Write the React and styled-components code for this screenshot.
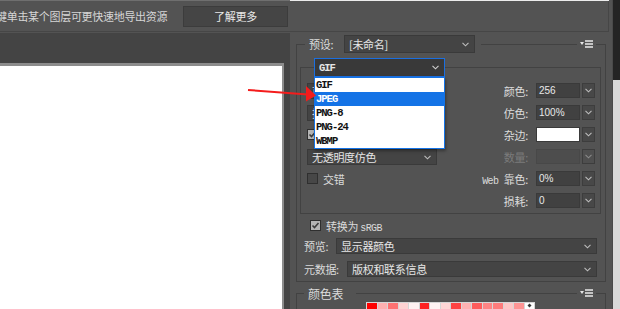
import React from 'react';
import styled, { createGlobalStyle } from 'styled-components';

const CJK = '"Noto Sans CJK SC", "Liberation Sans", sans-serif';
const MONO = '"Liberation Mono", "Noto Sans CJK SC", monospace';
const SANS = '"Liberation Sans", "Noto Sans CJK SC", sans-serif';
const LINE = '#424242';

const GlobalStyle = createGlobalStyle`
    * {
        box-sizing: border-box;
    }
    html,
    body {
        margin: 0;
        padding: 0;
        background: #535353;
    }
    body {
        width: 620px;
        height: 309px;
        overflow: hidden;
        font-family: ${CJK};
        font-size: 11px;
        letter-spacing: -0.3px;
        color: #dadada;
    }
`;

const Window = styled.div`
    position: relative;
    display: grid;
    grid-template-columns: 612px 8px;
    width: 620px;
    height: 309px;
    overflow: hidden;
`;

const Main = styled.div`
    display: flex;
    flex-direction: column;
    min-width: 0;
`;

const TopEdge = styled.div`
    height: 1px;
    background: linear-gradient(to right, #6f6f6f 290px, #ececec 290px, #ececec 609px, #535353 609px);
`;

const TopBar = styled.div`
    display: flex;
    align-items: center;
    height: 31px;
    margin-right: 3px;
    border-bottom: 1px solid #464646;
    border-right: 1px solid #464646;
`;

const Hint = styled.span`
    flex: 0 0 187px;
    margin-left: -4px;
    white-space: nowrap;
    color: #d6d6d6;
`;

const LearnButton = styled.div`
    display: flex;
    align-items: center;
    justify-content: center;
    width: 105px;
    height: 21px;
    background: #454545;
    border: 1px solid #3c3c3c;
    color: #e8e8e8;
    font-size: 11px;
`;

const Body = styled.div`
    display: flex;
    flex: 1;
    min-height: 0;
`;

const PreviewPane = styled.div`
    width: 290px;
    margin-top: 1px;
    padding: 30px 6px 0 0;
    background: #444444;
    overflow: hidden;
`;

const PreviewFrame = styled.div`
    height: 260px;
    margin-left: -10px;
    background: #ffffff;
    border-top: 3px solid #8c8c8c;
    border-right: 2px solid #8c8c8c;
`;

const SidePanel = styled.div`
    flex: 1;
    padding: 3px 0 0 6px;
`;

const RightStrip = styled.div`
    background: linear-gradient(to bottom, #242424 80px, #d9d9d9 80px);
    border-left: 1px solid #4a4a4a;
`;

const Group = styled.fieldset`
    width: ${props => (props.$w ? `${props.$w}px` : 'auto')};
    min-width: 0;
    margin: ${props => props.$mt || 0}px 0 0;
    padding: 0;
    border: 1px solid ${LINE};
`;

const GroupHead = styled.legend`
    display: flex;
    align-items: center;
    width: 100%;
    height: ${props => props.$h}px;
    padding: 0;
    margin: 0;
`;

const HeadLine = styled.span`
    flex: ${props => (props.$w ? `0 0 ${props.$w}px` : '1 1 auto')};
    height: 1px;
    margin: 0 ${props => props.$mr || 0}px 0 ${props => props.$ml || 0}px;
    background: ${LINE};
`;

const HeadLabel = styled.span`
    flex: 0 0 ${props => props.$w}px;
    margin-left: 4px;
    white-space: nowrap;
    font-size: ${props => props.$size || 11}px;
    color: #dcdcdc;
`;

const GroupBody = styled.div`
    padding: ${props => props.$pad};
`;

const Select = styled.div`
    display: flex;
    align-items: center;
    flex: ${props => (props.$w ? `0 0 ${props.$w}px` : '1 1 auto')};
    height: ${props => props.$h || 16}px;
    padding: 0 5px 0 4px;
    background: #444444;
    border: 1px solid #3a3a3a;
    color: #e6e6e6;
    min-width: 0;
`;

const SelectText = styled.span`
    flex: 1;
    white-space: nowrap;
    overflow: hidden;
`;

const FormatGroup = styled(Group)`
    padding: 0 5px 5px 6px;
`;

const FormatLegend = styled.legend`
    position: relative;
    width: 131px;
    height: 19px;
    margin-left: 7px;
    padding: 0;
`;

const FormatSelect = styled(Select)`
    height: 19px;
    background: #393939;
    border-color: #1b6fe0;
    font-family: ${MONO};
    font-size: 10.5px;
    font-weight: bold;
    letter-spacing: -1px;
`;

const FormatList = styled.ul`
    position: absolute;
    top: 100%;
    left: 0;
    z-index: 5;
    width: 131px;
    margin: 0;
    padding: 0;
    list-style: none;
    background: #ffffff;
    border: 1px solid #1473e6;
    box-shadow: 1px 2px 3px rgba(0, 0, 0, 0.35);
`;

const FormatItem = styled.li`
    height: 14px;
    line-height: 14px;
    padding-left: 1px;
    font-family: ${MONO};
    font-size: 10.5px;
    font-weight: bold;
    letter-spacing: -1px;
    color: ${props => (props.$active ? '#ffffff' : '#111111')};
    background: ${props => (props.$active ? '#1473e6' : 'transparent')};
`;

const OptionsGrid = styled.div`
    display: grid;
    grid-template-columns: 130px 1fr;
    grid-template-rows: repeat(6, 15px);
    row-gap: 7px;
    padding-top: 6px;
`;

const Field = styled.div`
    display: flex;
    align-items: center;
    justify-content: flex-end;
`;

const FieldLabel = styled.span`
    margin-right: 8px;
    white-space: nowrap;
    color: ${props => (props.$disabled ? '#7b7b7b' : '#dcdcdc')};
`;

const Latin = styled.span`
    font-family: ${MONO};
    font-size: 10px;
    letter-spacing: -0.6px;
`;

const FieldInput = styled.div`
    display: flex;
    align-items: center;
    width: 44px;
    height: 15px;
    padding-left: 2px;
    background: ${props => (props.$white ? '#ffffff' : props.$disabled ? '#4d4d4d' : '#414141')};
    border: 1px solid ${props => (props.$disabled ? '#484848' : '#3a3a3a')};
    font-family: ${SANS};
    font-size: 10px;
    letter-spacing: 0;
    color: #e8e8e8;
`;

const FieldArrow = styled.div`
    display: flex;
    align-items: center;
    justify-content: center;
    width: 13px;
    height: 15px;
    margin-left: 2px;
    background: ${props => (props.$disabled ? '#4f4f4f' : '#484848')};
    border: 1px solid #3d3d3d;
`;

const CheckRow = styled.div`
    display: flex;
    align-items: center;
    gap: 5px;
    height: ${props => props.$h || 15}px;
    margin: ${props => props.$m || 0};
    white-space: nowrap;
`;

const Box = styled.span`
    display: flex;
    align-items: center;
    justify-content: center;
    flex: 0 0 11px;
    height: 11px;
    border: 1px solid #2f2f2f;
    background: ${props => (props.$checked ? '#b4b4b4' : '#474747')};
`;

const Row = styled.div`
    display: flex;
    align-items: center;
    height: 16px;
    margin: ${props => props.$mt}px 4px 0 4px;
`;

const RowLabel = styled.span`
    flex: 0 0 ${props => props.$w}px;
    white-space: nowrap;
`;

const Swatches = styled.div`
    display: flex;
    gap: 1px;
    width: max-content;
    margin-left: 69px;
    padding: 1px 1px 0;
    background: #d6d6d6;
`;

const Swatch = styled.span`
    display: flex;
    justify-content: center;
    width: 9.5px;
    height: 12px;
    background: ${props => props.$color};
`;

const ArrowMark = styled.svg`
    position: absolute;
    left: 240px;
    top: 80px;
    z-index: 9;
`;

const Chevron = ({ color = '#bdbdbd' }) => (
    <svg width="7" height="5" viewBox="0 0 7 5">
        <polyline points="0.5,0.8 3.5,3.8 6.5,0.8" fill="none" stroke={color} strokeWidth="1.1" />
    </svg>
);

const MenuIcon = () => (
    <svg width="13" height="8" viewBox="0 0 13 8">
        <polygon points="0,2 4,2 2,5" fill="#e6e6e6" />
        <rect x="5" y="0" width="8" height="2" fill="#c4c4c4" />
        <rect x="5" y="3" width="8" height="2" fill="#c4c4c4" />
        <rect x="5" y="6" width="8" height="2" fill="#c4c4c4" />
    </svg>
);

const Check = () => (
    <svg width="9" height="9" viewBox="0 0 9 9">
        <polyline points="1.5,4.5 3.5,6.5 7.5,2" fill="none" stroke="#3c3c3c" strokeWidth="1.6" />
    </svg>
);

const formats = ['GIF', 'JPEG', 'PNG-8', 'PNG-24', 'WBMP'];

const fields = [
    { label: '颜色:', value: '256' },
    { label: '仿色:', value: '100%' },
    { label: '杂边:', white: true },
    { label: '数量:', disabled: true },
    { label: '靠色:', latin: 'Web ', value: '0%' },
    { label: '损耗:', value: '0' }
];

const swatchColors = [
    '#ff0000', '#ffb0b0', '#ff7272', '#ffd2d2', '#fff1f1', '#ff2222', '#fff3f3', '#ffd6d6',
    '#ff4444', '#ffb2b2', '#ff5c5c', '#ff8484', '#ff7c7c', '#ffc6c6', '#ff9494', '#ffffff'
];

const leftCells = [
    <Select key="a"><SelectText>可选择</SelectText><Chevron /></Select>,
    <Select key="b"><SelectText>扩散</SelectText><Chevron /></Select>,
    <CheckRow key="c"><Box $checked><Check /></Box>透明度</CheckRow>,
    <Select key="d"><SelectText>无透明度仿色</SelectText><Chevron /></Select>,
    <CheckRow key="e"><Box />交错</CheckRow>,
    <span key="f" />
];

const App = () => (
    <>
        <GlobalStyle />
        <Window>
            <Main>
                <TopEdge />
                <TopBar>
                    <Hint>键单击某个图层可更快速地导出资源</Hint>
                    <LearnButton>了解更多</LearnButton>
                </TopBar>
                <Body>
                    <PreviewPane>
                        <PreviewFrame />
                    </PreviewPane>
                    <SidePanel>
                        <Group $w={310}>
                            <GroupHead $h={18}>
                                <HeadLine $w={8} />
                                <HeadLabel $w={35}>预设:</HeadLabel>
                                <Select $w={131} $h={18}>
                                    <SelectText>[未命名]</SelectText>
                                    <Chevron />
                                </Select>
                                <HeadLine $ml={6} $mr={3} />
                                <MenuIcon />
                                <HeadLine $w={9} $ml={3} />
                            </GroupHead>
                            <GroupBody $pad="5px 4px 4px 3px">
                                <FormatGroup>
                                    <FormatLegend>
                                        <FormatSelect $w={131}>
                                            <SelectText>GIF</SelectText>
                                            <Chevron color="#d0d0d0" />
                                        </FormatSelect>
                                        <FormatList>
                                            {formats.map(f => (
                                                <FormatItem key={f} $active={f === 'JPEG'}>
                                                    {f}
                                                </FormatItem>
                                            ))}
                                        </FormatList>
                                    </FormatLegend>
                                    <OptionsGrid>
                                        {fields.map((field, i) => (
                                            <React.Fragment key={field.label}>
                                                {leftCells[i]}
                                                <Field>
                                                    <FieldLabel $disabled={field.disabled}>
                                                        {field.latin && <Latin>{field.latin}</Latin>}
                                                        {field.label}
                                                    </FieldLabel>
                                                    <FieldInput $white={field.white} $disabled={field.disabled}>
                                                        {field.value}
                                                    </FieldInput>
                                                    <FieldArrow $disabled={field.disabled}>
                                                        <Chevron color={field.disabled ? '#8a8a8a' : '#bdbdbd'} />
                                                    </FieldArrow>
                                                </Field>
                                            </React.Fragment>
                                        ))}
                                    </OptionsGrid>
                                </FormatGroup>
                                <CheckRow $h={11} $m="6px 0 0 10px">
                                    <Box $checked>
                                        <Check />
                                    </Box>
                                    <span>
                                        转换为 <Latin>sRGB</Latin>
                                    </span>
                                </CheckRow>
                                <Row $mt={7}>
                                    <RowLabel $w={32}>预览:</RowLabel>
                                    <Select>
                                        <SelectText>显示器颜色</SelectText>
                                        <Chevron />
                                    </Select>
                                </Row>
                                <Row $mt={7}>
                                    <RowLabel $w={43}>元数据:</RowLabel>
                                    <Select>
                                        <SelectText>版权和联系信息</SelectText>
                                        <Chevron />
                                    </Select>
                                </Row>
                            </GroupBody>
                        </Group>
                        <Group $w={310} $mt={4}>
                            <GroupHead $h={14}>
                                <HeadLine $w={7} />
                                <HeadLabel $w={36} $size={12}>颜色表</HeadLabel>
                                <HeadLine $ml={12} $mr={3} />
                                <MenuIcon />
                                <HeadLine $w={9} $ml={3} />
                            </GroupHead>
                            <GroupBody $pad="2px 0 0 0">
                                <Swatches>
                                    {swatchColors.map((c, i) => (
                                        <Swatch key={i} $color={c}>
                                            {i === swatchColors.length - 1 && (
                                                <svg width="5" height="5" viewBox="0 0 5 5">
                                                    <polygon points="2.5,0.5 4.5,2.5 2.5,4.5 0.5,2.5" fill="#333" />
                                                </svg>
                                            )}
                                        </Swatch>
                                    ))}
                                </Swatches>
                            </GroupBody>
                        </Group>
                    </SidePanel>
                </Body>
            </Main>
            <RightStrip />
            <ArrowMark width="80" height="26" viewBox="0 0 80 26">
                <line x1="8" y1="10" x2="68" y2="14.5" stroke="#f41c1c" strokeWidth="2" />
                <polygon points="66,6 76,15.5 66,21.5" fill="#f41c1c" />
            </ArrowMark>
        </Window>
    </>
);

export default App;
